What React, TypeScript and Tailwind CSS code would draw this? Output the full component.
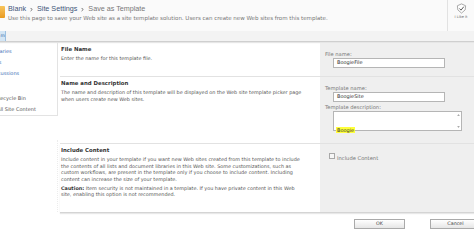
import { ChevronRight } from 'lucide-react';

const body = "font-['DejaVu_Sans',Verdana,sans-serif]";

function SectionText({ title, children }: { title: string; children: React.ReactNode }) {
  return (
    <div className="flex-1 pl-[1px]">
      <div className={`${body} text-[5.4px] font-bold text-[#333] leading-[6px]`}>{title}</div>
      <div className={`${body} mt-[3px] text-[4.9px] leading-[6.5px] text-[#555] whitespace-nowrap`}>{children}</div>
    </div>
  );
}

function Field({ label, value }: { label: string; value: string }) {
  return (
    <div>
      <div className={`${body} text-[5.2px] text-[#777] leading-[6px] pl-[5px]`}>{label}</div>
      <div className="ml-[13px] mt-[1px] h-[10px] w-[112px] border border-[#b5b5b5] bg-white flex items-center pl-[3px]">
        <span className={`${body} text-[5px] text-[#333]`}>{value}</span>
      </div>
    </div>
  );
}

export default function App() {
  return (
    <div className="w-[474px] h-[236px] overflow-hidden bg-white relative">
      {/* header */}
      <div className="h-[31px] flex bg-[#fafafa]">
        <div className="w-[5px] h-[12px] mt-[6px] bg-gradient-to-b from-[#f8c55a] to-[#e99a1c] rounded-r-[1px]" />
        <div className="flex-1 pl-[3px] pt-[4px]">
          <div className="flex items-center gap-[3px] font-['Liberation_Sans',Arial,sans-serif] text-[7.2px] leading-[10px]">
            <span className="text-[#3e5578]">Blank</span>
            <ChevronRight className="w-[5px] h-[5px] text-[#555]" strokeWidth={4} />
            <span className="text-[#3e5578]">Site Settings</span>
            <ChevronRight className="w-[5px] h-[5px] text-[#555]" strokeWidth={4} />
            <span className="text-[#777]">Save as Template</span>
          </div>
          <div className={`${body} text-[5.5px] leading-[6px] text-[#777] mt-[1px] whitespace-nowrap`}>
            Use this page to save your Web site as a site template solution. Users can create new Web sites from this template.
          </div>
        </div>
        <div className="w-[27px] shrink-0 border-l border-[#e2e2e2] flex flex-col items-center pt-[3px]">
          <svg viewBox="0 0 12 12" className="w-[11px] h-[11px]">
            <path d="M6 1 L10.5 3 L10 7.5 L6 11 L2 7.5 L1.5 3 Z" fill="#fff" stroke="#8a8a8a" strokeWidth="0.8" />
            <path d="M3.8 6 L5.5 7.8 L8.5 4" fill="none" stroke="#4a4a4a" strokeWidth="1" />
          </svg>
          <span className={`${body} text-[3.6px] text-[#666] mt-[1px]`}>I Like It</span>
        </div>
      </div>

      {/* ribbon tab row */}
      <div className="h-[11px] bg-[#f3f3f3] border-b border-[#cfcfcf] shadow-[0_1px_1px_#e4e4e4] flex">
        <div className="w-[6px] h-full bg-[#d4e6f5] border-r border-[#9cc0e0] flex items-center justify-end overflow-hidden">
          <span className={`${body} text-[4.5px] text-[#2b5e9e]`}>m</span>
        </div>
      </div>

      {/* body */}
      <div className="flex">
        {/* quick launch */}
        <div className="w-[58px] shrink-0">
          <div className={`${body} h-[74px] border-r border-b border-[#e3e3e3] text-[5px] leading-[11px] overflow-hidden pt-[4px]`}>
            <div className="-ml-[10px] text-[#3b6cb5]">Libraries</div>
            <div className="-ml-[10px] text-[#3b6cb5]">Lists</div>
            <div className="-ml-[10px] text-[#3b6cb5]">Discussions</div>
            <div className="h-[14px]" />
            <div className="-ml-[3px] text-[#555]">Recycle Bin</div>
            <div className="-ml-[3px] text-[#555]">All Site Content</div>
          </div>
          <div className="ml-[56px] mt-[24px] h-[72px] border-r border-dotted border-[#ececec]" />
        </div>

        {/* form */}
        <div className="flex-1 pl-[2px] min-w-0">
          <div className="border-t border-[#e6e6e6]">
            {/* File Name */}
            <div className="flex h-[34px] border-b border-[#e2e2e2]">
              <div className="pt-[3px] flex-1 min-w-0">
                <SectionText title="File Name">Enter the name for this template file.</SectionText>
              </div>
              <div className="w-[154px] shrink-0 bg-[#efefef] pt-[8px]">
                <Field label="File name:" value="BoogieFile" />
              </div>
            </div>

            {/* Name and Description */}
            <div className="flex h-[67px] border-b border-[#e2e2e2]">
              <div className="pt-[3px] flex-1 min-w-0">
                <SectionText title="Name and Description">
                  The name and description of this template will be displayed on the Web site template picker page<br />
                  when users create new Web sites.
                </SectionText>
              </div>
              <div className="w-[154px] shrink-0 bg-[#efefef] pt-[8px]">
                <Field label="Template name:" value="BoogieSite" />
                <div className={`${body} text-[5.2px] text-[#777] leading-[6px] pl-[5px] mt-[2px]`}>Template description:</div>
                <div className="ml-[13px] mt-[1px] h-[20px] w-[129px] border border-[#b5b5b5] bg-white flex">
                  <div className="flex-1 pl-[2px] pt-[2px]">
                    <span className={`${body} text-[5px] leading-[6px] bg-[#ffff3a] text-[#333] px-[1px]`}>Boogie</span>
                  </div>
                  <div className="w-[6px] flex flex-col justify-between items-center py-[2px]">
                    <svg viewBox="0 0 4 3" className="w-[3px] h-[2px]"><path d="M0 3 L2 0 L4 3 Z" fill="#aaa" /></svg>
                    <svg viewBox="0 0 4 3" className="w-[3px] h-[2px]"><path d="M0 0 L2 3 L4 0 Z" fill="#aaa" /></svg>
                  </div>
                </div>
              </div>
            </div>

            {/* Include Content */}
            <div className="flex h-[69px] border-b border-[#d4d4d4] shadow-[0_1px_1px_#e8e8e8]">
              <div className="pt-[3px] flex-1 min-w-0">
                <SectionText title="Include Content">
                  <p>
                    Include content in your template if you want new Web sites created from this template to include<br />
                    the contents of all lists and document libraries in this Web site. Some customizations, such as<br />
                    custom workflows, are present in the template only if you choose to include content. Including<br />
                    content can increase the size of your template.
                  </p>
                  <p className="mt-[2.5px]">
                    <span className="font-bold text-[#333]">Caution:</span> Item security is not maintained in a template. If you have private content in this Web<br />
                    site, enabling this option is not recommended.
                  </p>
                </SectionText>
              </div>
              <div className="w-[154px] shrink-0 bg-[#efefef] pt-[8px] pl-[9px] flex items-start gap-[2px]">
                <div className="w-[6px] h-[6px] border border-[#a8a8a8] bg-[#f6f6f6] mt-[1px]" />
                <span className={`${body} text-[5.2px] text-[#777] leading-[6px] mt-[3px]`}>Include Content</span>
              </div>
            </div>

            {/* buttons */}
            <div className="flex gap-[25px] pl-[294px] pt-[6px]">
              <button className={`${body} w-[51px] h-[10px] shrink-0 border border-[#aaa] bg-gradient-to-b from-white to-[#e6e6e6] text-[4.8px] text-[#444] leading-none`}>OK</button>
              <button className={`${body} w-[51px] h-[10px] shrink-0 border border-[#aaa] bg-gradient-to-b from-white to-[#e6e6e6] text-[4.8px] text-[#444] leading-none`}>Cancel</button>
            </div>
          </div>
        </div>
      </div>
    </div>
  );
}
